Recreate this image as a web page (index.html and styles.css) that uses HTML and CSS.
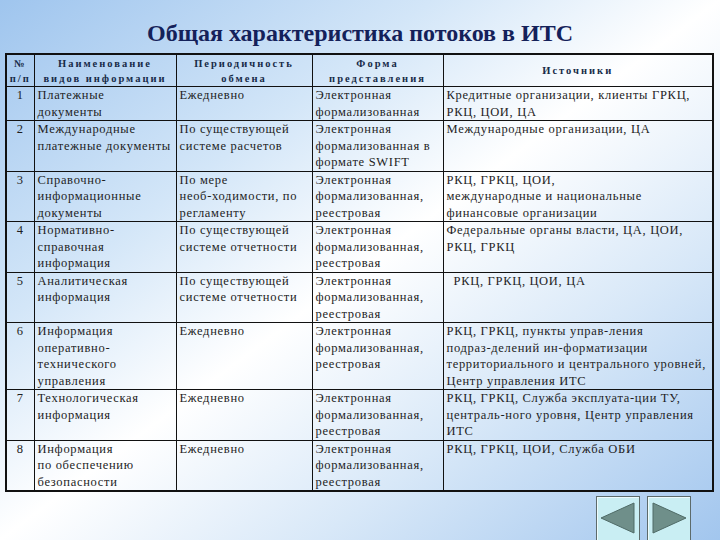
FILE: index.html
```html
<!DOCTYPE html>
<html lang="ru">
<head>
<meta charset="utf-8">
<title>Общая характеристика потоков в ИТС</title>
<link rel="stylesheet" href="styles.css">
</head>
<body>
<div class="slide">
  <h1 class="title">Общая характеристика потоков в ИТС</h1>
  <table class="grid">
    <colgroup>
      <col class="c1"><col class="c2"><col class="c3"><col class="c4"><col class="c5">
    </colgroup>
    <thead>
      <tr>
        <th>№<br>п/п</th>
        <th>Наименование<br>видов информации</th>
        <th>Периодичность<br>обмена</th>
        <th>Форма<br>представления</th>
        <th>Источники</th>
      </tr>
    </thead>
    <tbody>
      <tr>
        <td class="num">1</td>
        <td>Платежные<br>документы</td>
        <td>Ежедневно</td>
        <td>Электронная<br>формализованная</td>
        <td>Кредитные организации, клиенты ГРКЦ,<br>РКЦ, ЦОИ, ЦА</td>
      </tr>
      <tr>
        <td class="num">2</td>
        <td>Международные<br>платежные документы</td>
        <td>По существующей<br>системе расчетов</td>
        <td>Электронная<br>формализованная в<br>формате SWIFT</td>
        <td>Международные организации, ЦА</td>
      </tr>
      <tr>
        <td class="num">3</td>
        <td>Справочно-<br>информационные<br>документы</td>
        <td>По мере<br>необ-ходимости, по<br>регламенту</td>
        <td>Электронная<br>формализованная,<br>реестровая</td>
        <td>РКЦ, ГРКЦ, ЦОИ,<br>международные и национальные<br>финансовые организации</td>
      </tr>
      <tr>
        <td class="num">4</td>
        <td>Нормативно-<br>справочная<br>информация</td>
        <td>По существующей<br>системе отчетности</td>
        <td>Электронная<br>формализованная,<br>реестровая</td>
        <td>Федеральные органы власти, ЦА, ЦОИ,<br>РКЦ, ГРКЦ</td>
      </tr>
      <tr>
        <td class="num">5</td>
        <td>Аналитическая<br>информация</td>
        <td>По существующей<br>системе отчетности</td>
        <td>Электронная<br>формализованная,<br>реестровая</td>
        <td class="ind">РКЦ, ГРКЦ, ЦОИ, ЦА</td>
      </tr>
      <tr>
        <td class="num">6</td>
        <td>Информация<br>оперативно-<br>технического<br>управления</td>
        <td>Ежедневно</td>
        <td>Электронная<br>формализованная,<br>реестровая</td>
        <td>РКЦ, ГРКЦ, пункты управ-ления<br>подраз-делений ин-форматизации<br>территориального и центрального уровней,<br>Центр управления ИТС</td>
      </tr>
      <tr>
        <td class="num">7</td>
        <td>Технологическая<br>информация</td>
        <td>Ежедневно</td>
        <td>Электронная<br>формализованная,<br>реестровая</td>
        <td>РКЦ, ГРКЦ, Служба эксплуата-ции ТУ,<br>централь-ного уровня, Центр управления<br>ИТС</td>
      </tr>
      <tr>
        <td class="num">8</td>
        <td>Информация<br>по обеспечению<br>безопасности</td>
        <td>Ежедневно</td>
        <td>Электронная<br>формализованная,<br>реестровая</td>
        <td>РКЦ, ГРКЦ, ЦОИ, Служба ОБИ</td>
      </tr>
    </tbody>
  </table>
  <div class="nav">
    <div class="navbtn" aria-label="Назад">
      <svg width="44" height="46" viewBox="0 0 44 46"><polygon points="5,22 38,7 38,37" class="tri"/></svg>
    </div>
    <div class="navbtn" aria-label="Вперёд">
      <svg width="44" height="46" viewBox="0 0 44 46"><polygon points="6,7 39,22 6,37" class="tri"/></svg>
    </div>
  </div>
</div>
</body>
</html>
```
FILE: styles.css
```css
html, body {
  margin: 0;
  padding: 0;
}
body {
  width: 720px;
  height: 540px;
  overflow: hidden;
  background: linear-gradient(to bottom right, #9fc5ee 0%, #d3e6f8 30%, #ffffff 50%, #d8e8f8 72%, #a2c6ee 100%);
  font-family: "Liberation Serif", "Times New Roman", serif;
}
.slide {
  width: 720px;
  height: 540px;
  display: flex;
  flex-direction: column;
}
.title {
  flex: none;
  margin: 0;
  height: 53px;
  box-sizing: border-box;
  padding-top: 21px;
  text-align: center;
  font-family: "Liberation Serif", "Times New Roman", serif;
  font-weight: bold;
  font-size: 24px;
  line-height: 1;
  color: #14215a;
}
.grid {
  flex: none;
  margin-left: 5px;
  width: 707px;
  border-collapse: collapse;
  table-layout: fixed;
  border: 2px solid #111;
}
.c1 { width: 28px; }
.c2 { width: 142px; }
.c3 { width: 136px; }
.c4 { width: 131px; }
.c5 { width: 270px; }
.grid th {
  height: 31px;
  padding: 0;
  border: 1px solid #111;
  font-family: "Liberation Serif", "Times New Roman", serif;
  font-weight: bold;
  font-size: 10.5px;
  line-height: 15px;
  letter-spacing: 2px;
  color: #172b48;
  text-align: center;
  vertical-align: middle;
}
.grid td {
  padding: 0 2px 0 3px;
  border: 1px solid #111;
  font-family: "Liberation Serif", "Times New Roman", serif;
  font-size: 12.5px;
  line-height: 16.5px;
  letter-spacing: 0.7px;
  color: #1e1e1e;
  vertical-align: top;
  white-space: nowrap;
  overflow: hidden;
}
.grid td.num {
  text-align: center;
  padding: 0;
}
.grid td.ind {
  padding-left: 10px;
}
.nav {
  flex: none;
  display: flex;
  justify-content: flex-end;
  gap: 7px;
  margin-top: 4px;
  padding-right: 29px;
}
.navbtn {
  width: 44px;
  height: 46px;
  box-sizing: border-box;
  background: #c9eef3;
  border: 1px solid #5d6b6b;
  box-shadow: inset 1px 1px 0 #eefbfc;
}
.navbtn svg {
  display: block;
  margin: -1px;
}
.tri {
  fill: #6f8f8a;
  stroke: #4f6b67;
  stroke-width: 1;
}
```
